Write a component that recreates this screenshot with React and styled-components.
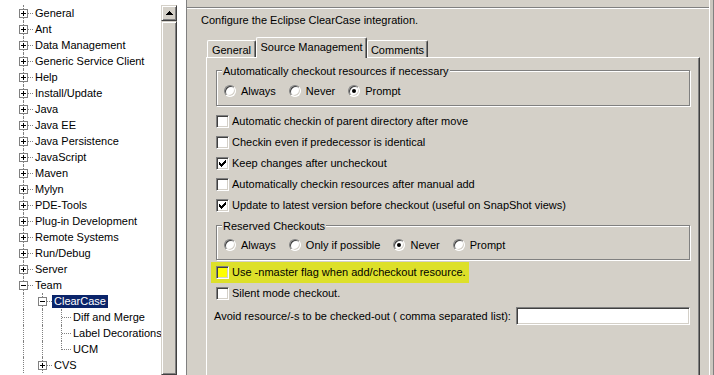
import styled, { createGlobalStyle, css } from "styled-components";

const GlobalStyle = createGlobalStyle`
  html, body {
    margin: 0;
    padding: 0;
    background: #fff;
  }
  body {
    font-family: "Liberation Sans", Arial, sans-serif;
    font-size: 11px;
    color: #000;
  }
`;

const raised = css`
  background: #d4d0c8;
  border: 1px solid;
  border-color: #d4d0c8 #404040 #404040 #d4d0c8;
  box-shadow: inset 1px 1px #fff, inset -1px -1px #808080;
`;

const sunken = css`
  border: 1px solid;
  border-color: #808080 #fff #fff #808080;
  box-shadow: inset 1px 1px #404040, inset -1px -1px #d4d0c8;
`;

const Window = styled.div`
  display: flex;
  width: 714px;
  height: 375px;
  overflow: hidden;
  line-height: 13px;
`;

/* ---------- left: preference tree ---------- */

const TreePane = styled.div`
  display: flex;
  width: 186px;
  flex-shrink: 0;
  padding-top: 5px;
  box-sizing: border-box;
  background: #fff;
`;

const Tree = styled.div`
  width: 161px;
  flex-shrink: 0;
  display: flex;
  flex-direction: column;
  padding-left: 14px;
  box-sizing: border-box;
  overflow: hidden;
`;

const TreeRow = styled.div`
  display: flex;
  align-items: center;
  height: 16px;
  flex-shrink: 0;
  white-space: nowrap;
`;

const Cell = styled.span`
  position: relative;
  width: 19px;
  height: 16px;
  flex-shrink: 0;
  display: flex;
  justify-content: center;
  align-items: flex-start;

  &::before {
    content: "";
    display: ${({ $v }) => ($v ? "block" : "none")};
    position: absolute;
    left: 9px;
    top: 0;
    height: ${({ $v }) => ($v === "last" ? "9px" : "16px")};
    border-left: 1px dotted #808080;
  }

  &::after {
    content: "";
    display: ${({ $h }) => ($h ? "block" : "none")};
    position: absolute;
    left: 10px;
    right: 0;
    top: 8px;
    border-top: 1px dotted #808080;
  }
`;

const Expander = styled.span`
  position: relative;
  z-index: 1;
  width: 9px;
  height: 9px;
  margin-top: 4px;
  box-sizing: border-box;
  border: 1px solid #808080;
  background: #fff;

  &::before {
    content: "";
    position: absolute;
    left: 1px;
    top: 3px;
    width: 5px;
    height: 1px;
    background: #000;
  }

  &::after {
    content: "";
    display: ${({ $open }) => ($open ? "none" : "block")};
    position: absolute;
    left: 3px;
    top: 1px;
    width: 1px;
    height: 5px;
    background: #000;
  }
`;

const NodeLabel = styled.span`
  padding: 0 2px;
  background: ${({ $selected }) => ($selected ? "#0a246a" : "transparent")};
  color: ${({ $selected }) => ($selected ? "#fff" : "#000")};
`;

const ScrollBar = styled.div`
  width: 16px;
  flex-shrink: 0;
  display: flex;
  flex-direction: column;
`;

const ScrollButton = styled.div`
  ${raised};
  height: 16px;
  flex-shrink: 0;
  box-sizing: border-box;
  display: flex;
  align-items: center;
  justify-content: center;
`;

const ScrollThumb = styled.div`
  ${raised};
  flex: 1;
`;

/* ---------- right: preference page ---------- */

const PrefPane = styled.div`
  flex: 1;
  display: flex;
  border-left: 1px solid #808080;
  background: #d4d0c8;
`;

const PageBody = styled.div`
  flex: 1;
  min-width: 0;
  display: flex;
  flex-direction: column;
`;

const EdgeStrip = styled.div`
  width: 5px;
  flex-shrink: 0;
  box-sizing: border-box;
  border-left: 1px solid #fff;
  border-right: 1px solid #808080;
  background: #cbc7bf;
`;

const Separator = styled.div`
  flex-shrink: 0;
  margin-top: 7px;
  height: 2px;
  box-sizing: border-box;
  border-top: 1px solid #808080;
  border-bottom: 1px solid #fff;
`;

const Description = styled.div`
  margin: 5px 0 0 14px;
`;

const TabFolder = styled.div`
  flex: 1;
  display: flex;
  flex-direction: column;
  margin: 10px 9px 0 19px;
`;

const TabStrip = styled.div`
  position: relative;
  z-index: 1;
  display: flex;
  align-items: flex-end;
  height: 20px;
  padding-left: 1px;
`;

const Tab = styled.div`
  width: ${({ $w }) => $w}px;
  height: ${({ $active }) => ($active ? 21 : 17)}px;
  margin-bottom: ${({ $active }) => ($active ? -1 : 0)}px;
  box-sizing: border-box;
  padding-top: 3px;
  text-align: center;
  white-space: nowrap;
  background: #d4d0c8;
  border-top: 1px solid #fff;
  border-left: 1px solid #fff;
  border-right: 1px solid #404040;
  border-radius: 2px 2px 0 0;
  box-shadow: inset -1px 0 #808080;
`;

const TabPanel = styled.div`
  flex: 1;
  display: flex;
  flex-direction: column;
  border-top: 1px solid #fff;
  border-left: 1px solid #fff;
  border-right: 1px solid #404040;
  box-shadow: inset -1px 0 #808080;
`;

const Group = styled.div`
  margin: ${({ $top }) => $top}px 9px 0 9px;
  padding: 0 0 6px 7px;
  border: 1px solid #808080;
  box-shadow: inset 1px 1px #fff, 1px 1px #fff;
`;

const Legend = styled.div`
  width: fit-content;
  margin: -6px 0 0 -2px;
  padding: 0 1px;
  background: #d4d0c8;
  white-space: nowrap;
`;

const RadioRow = styled.div`
  display: flex;
  align-items: center;
  height: 16px;
  margin-top: ${({ $top }) => $top}px;
`;

const RadioOption = styled.label`
  display: flex;
  align-items: center;
  gap: 5px;
  margin-right: 13px;
  white-space: nowrap;
`;

const RadioDot = styled.span`
  ${sunken};
  width: 12px;
  height: 12px;
  box-sizing: border-box;
  border-radius: 50%;
  background: #fff;
  display: flex;
  align-items: center;
  justify-content: center;

  &::after {
    content: "";
    display: ${({ $checked }) => ($checked ? "block" : "none")};
    width: 4px;
    height: 4px;
    border-radius: 50%;
    background: #000;
  }
`;

const CheckList = styled.div`
  display: flex;
  flex-direction: column;
  margin-top: ${({ $top }) => $top}px;
`;

const CheckRow = styled.label`
  display: flex;
  align-items: center;
  gap: 3px;
  height: 21px;
  width: fit-content;
  white-space: nowrap;
  ${({ $marked }) =>
    $marked
      ? css`
          margin-left: 4px;
          padding: 0 3px 0 5px;
          background: #dde02a;
        `
      : css`
          padding-left: 9px;
        `}
`;

const Box = styled.span`
  ${sunken};
  width: 13px;
  height: 13px;
  flex-shrink: 0;
  box-sizing: border-box;
  background: ${({ $marked }) => ($marked ? "#ffff00" : "#fff")};
  display: flex;
  align-items: center;
  justify-content: center;
`;

const FieldRow = styled.div`
  display: flex;
  align-items: center;
  gap: 5px;
  margin: 3px 9px 0 7px;
  white-space: nowrap;
`;

const TextInput = styled.div`
  ${sunken};
  flex: 1;
  height: 18px;
  box-sizing: border-box;
  background: #fff;
`;

/* ---------- data ---------- */

const topLevel = [
  "General",
  "Ant",
  "Data Management",
  "Generic Service Client",
  "Help",
  "Install/Update",
  "Java",
  "Java EE",
  "Java Persistence",
  "JavaScript",
  "Maven",
  "Mylyn",
  "PDE-Tools",
  "Plug-in Development",
  "Remote Systems",
  "Run/Debug",
  "Server",
];

const nodes = [
  ...topLevel.map((label) => ({ label, guides: [], exp: "plus" })),
  { label: "Team", guides: [], exp: "minus" },
  { label: "ClearCase", guides: [true], exp: "minus", selected: true },
  { label: "Diff and Merge", guides: [true, true] },
  { label: "Label Decorations", guides: [true, true] },
  { label: "UCM", guides: [true, true], last: true },
  { label: "CVS", guides: [true], exp: "plus" },
];

const checks = [
  { label: "Automatic checkin of parent directory after move" },
  { label: "Checkin even if predecessor is identical" },
  { label: "Keep changes after uncheckout", checked: true },
  { label: "Automatically checkin resources after manual add" },
  { label: "Update to latest version before checkout (useful on SnapShot views)", checked: true },
];

const CheckMark = () => (
  <svg width="7" height="7" viewBox="0 0 7 7" shapeRendering="crispEdges">
    <path
      d="M0 2h1v3H0z M1 3h1v3H1z M2 4h1v3H2z M3 3h1v3H3z M4 2h1v3H4z M5 1h1v3H5z M6 0h1v3H6z"
      fill="#000"
    />
  </svg>
);

const Check = ({ label, checked, marked }) => (
  <CheckRow $marked={marked}>
    <Box $marked={marked}>{checked && <CheckMark />}</Box>
    {label}
  </CheckRow>
);

const Radios = ({ options, value, top }) => (
  <RadioRow $top={top}>
    {options.map((opt) => (
      <RadioOption key={opt}>
        <RadioDot $checked={opt === value} />
        {opt}
      </RadioOption>
    ))}
  </RadioRow>
);

const TreeNode = ({ node }) => (
  <TreeRow>
    {node.guides.map((g, i) => (
      <Cell key={i} $v={g ? "full" : null} />
    ))}
    <Cell $v={node.last ? "last" : "full"} $h>
      {node.exp && <Expander $open={node.exp === "minus"} />}
    </Cell>
    <NodeLabel $selected={node.selected}>{node.label}</NodeLabel>
  </TreeRow>
);

export default function App() {
  return (
    <>
      <GlobalStyle />
      <Window>
        <TreePane>
          <Tree>
            {nodes.map((n) => (
              <TreeNode key={n.label} node={n} />
            ))}
          </Tree>
          <ScrollBar>
            <ScrollButton>
              <svg width="7" height="4" viewBox="0 0 7 4" shapeRendering="crispEdges">
                <path d="M3 0h1v1H3z M2 1h3v1H2z M1 2h5v1H1z M0 3h7v1H0z" fill="#000" />
              </svg>
            </ScrollButton>
            <ScrollThumb />
          </ScrollBar>
        </TreePane>

        <PrefPane>
          <PageBody>
            <Separator />
            <Description>Configure the Eclipse ClearCase integration.</Description>
            <TabFolder>
              <TabStrip>
                <Tab $w={49}>General</Tab>
                <Tab $w={111} $active>
                  Source Management
                </Tab>
                <Tab $w={61}>Comments</Tab>
              </TabStrip>
              <TabPanel>
                <Group $top={12}>
                  <Legend>Automatically checkout resources if necessary</Legend>
                  <Radios options={["Always", "Never", "Prompt"]} value="Prompt" top={5} />
                </Group>

                <CheckList $top={5}>
                  {checks.map((c) => (
                    <Check key={c.label} {...c} />
                  ))}
                </CheckList>

                <Group $top={9}>
                  <Legend>Reserved Checkouts</Legend>
                  <Radios
                    options={["Always", "Only if possible", "Never", "Prompt"]}
                    value="Never"
                    top={4}
                  />
                </Group>

                <CheckList $top={2}>
                  <Check label="Use -nmaster flag when add/checkout resource." marked />
                  <Check label="Silent mode checkout." />
                </CheckList>

                <FieldRow>
                  Avoid resource/-s to be checked-out ( comma separated list):
                  <TextInput />
                </FieldRow>
              </TabPanel>
            </TabFolder>
          </PageBody>
          <EdgeStrip />
        </PrefPane>
      </Window>
    </>
  );
}
